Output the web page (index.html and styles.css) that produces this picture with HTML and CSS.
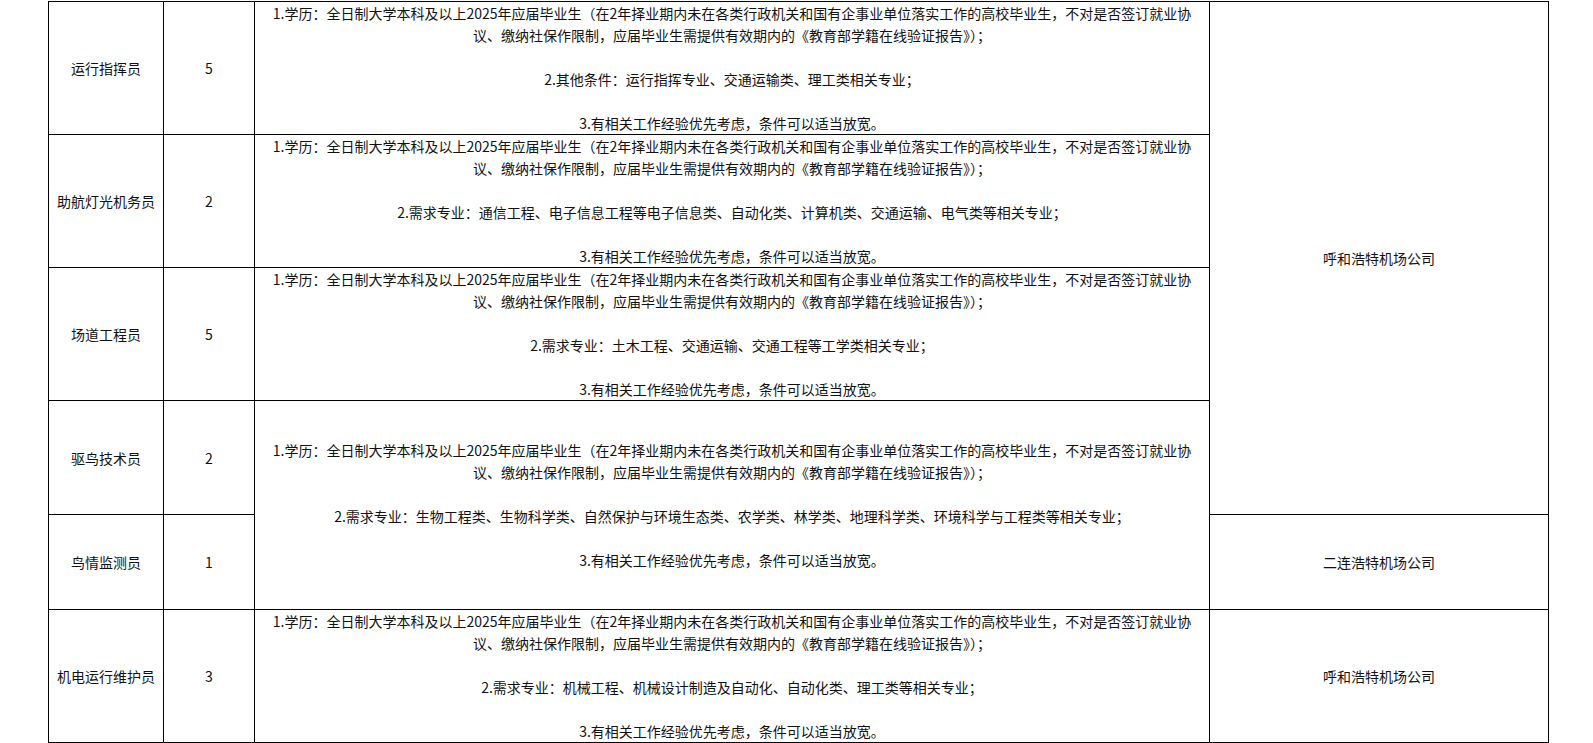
FILE: index.html
```html
<!DOCTYPE html>
<html lang="zh-CN">
<head>
<meta charset="utf-8">
<title>岗位表</title>
<link rel="stylesheet" href="styles.css">
</head>
<body>
<table class="jobs">
  <colgroup>
    <col class="c-name">
    <col class="c-num">
    <col class="c-req">
    <col class="c-co">
  </colgroup>
  <tbody>
    <tr class="r-full">
      <td>运行指挥员</td>
      <td>5</td>
      <td class="req">1.学历：全日制大学本科及以上2025年应届毕业生（在2年择业期内未在各类行政机关和国有企事业单位落实工作的高校毕业生，不对是否签订就业协<br>议、缴纳社保作限制，应届毕业生需提供有效期内的《教育部学籍在线验证报告》）；<br><br>2.其他条件：运行指挥专业、交通运输类、理工类相关专业；<br><br>3.有相关工作经验优先考虑，条件可以适当放宽。</td>
      <td rowspan="4">呼和浩特机场公司</td>
    </tr>
    <tr class="r-full">
      <td>助航灯光机务员</td>
      <td>2</td>
      <td class="req">1.学历：全日制大学本科及以上2025年应届毕业生（在2年择业期内未在各类行政机关和国有企事业单位落实工作的高校毕业生，不对是否签订就业协<br>议、缴纳社保作限制，应届毕业生需提供有效期内的《教育部学籍在线验证报告》）；<br><br>2.需求专业：通信工程、电子信息工程等电子信息类、自动化类、计算机类、交通运输、电气类等相关专业；<br><br>3.有相关工作经验优先考虑，条件可以适当放宽。</td>
    </tr>
    <tr class="r-full">
      <td>场道工程员</td>
      <td>5</td>
      <td class="req">1.学历：全日制大学本科及以上2025年应届毕业生（在2年择业期内未在各类行政机关和国有企事业单位落实工作的高校毕业生，不对是否签订就业协<br>议、缴纳社保作限制，应届毕业生需提供有效期内的《教育部学籍在线验证报告》）；<br><br>2.需求专业：土木工程、交通运输、交通工程等工学类相关专业；<br><br>3.有相关工作经验优先考虑，条件可以适当放宽。</td>
    </tr>
    <tr class="r-bird">
      <td>驱鸟技术员</td>
      <td>2</td>
      <td class="req" rowspan="2">1.学历：全日制大学本科及以上2025年应届毕业生（在2年择业期内未在各类行政机关和国有企事业单位落实工作的高校毕业生，不对是否签订就业协<br>议、缴纳社保作限制，应届毕业生需提供有效期内的《教育部学籍在线验证报告》）；<br><br>2.需求专业：生物工程类、生物科学类、自然保护与环境生态类、农学类、林学类、地理科学类、环境科学与工程类等相关专业；<br><br>3.有相关工作经验优先考虑，条件可以适当放宽。</td>
    </tr>
    <tr class="r-watch">
      <td>鸟情监测员</td>
      <td>1</td>
      <td>二连浩特机场公司</td>
    </tr>
    <tr class="r-full">
      <td>机电运行维护员</td>
      <td>3</td>
      <td class="req">1.学历：全日制大学本科及以上2025年应届毕业生（在2年择业期内未在各类行政机关和国有企事业单位落实工作的高校毕业生，不对是否签订就业协<br>议、缴纳社保作限制，应届毕业生需提供有效期内的《教育部学籍在线验证报告》）；<br><br>2.需求专业：机械工程、机械设计制造及自动化、自动化类、理工类等相关专业；<br><br>3.有相关工作经验优先考虑，条件可以适当放宽。</td>
      <td>呼和浩特机场公司</td>
    </tr>
  </tbody>
</table>
</body>
</html>
```
FILE: styles.css
```css
html, body {
  margin: 0;
  padding: 0;
  background: #ffffff;
}

body {
  padding: 1px 0 0 48px;
  font-family: "Noto Sans CJK SC", "Noto Sans", sans-serif;
  font-size: 14px;
  color: #111111;
}

.jobs {
  border-collapse: collapse;
  table-layout: fixed;
  width: 1500px;
}

.c-name { width: 115px; }
.c-num { width: 91px; }
.c-req { width: 955px; }
.c-co { width: 339px; }

.jobs td {
  border: 1px solid #000;
  padding: 0;
  text-align: center;
  vertical-align: middle;
  line-height: 22px;
  white-space: nowrap;
  overflow: hidden;
}

.r-full { height: 133px; }
.r-bird { height: 114px; }
.r-watch { height: 95px; }
```
